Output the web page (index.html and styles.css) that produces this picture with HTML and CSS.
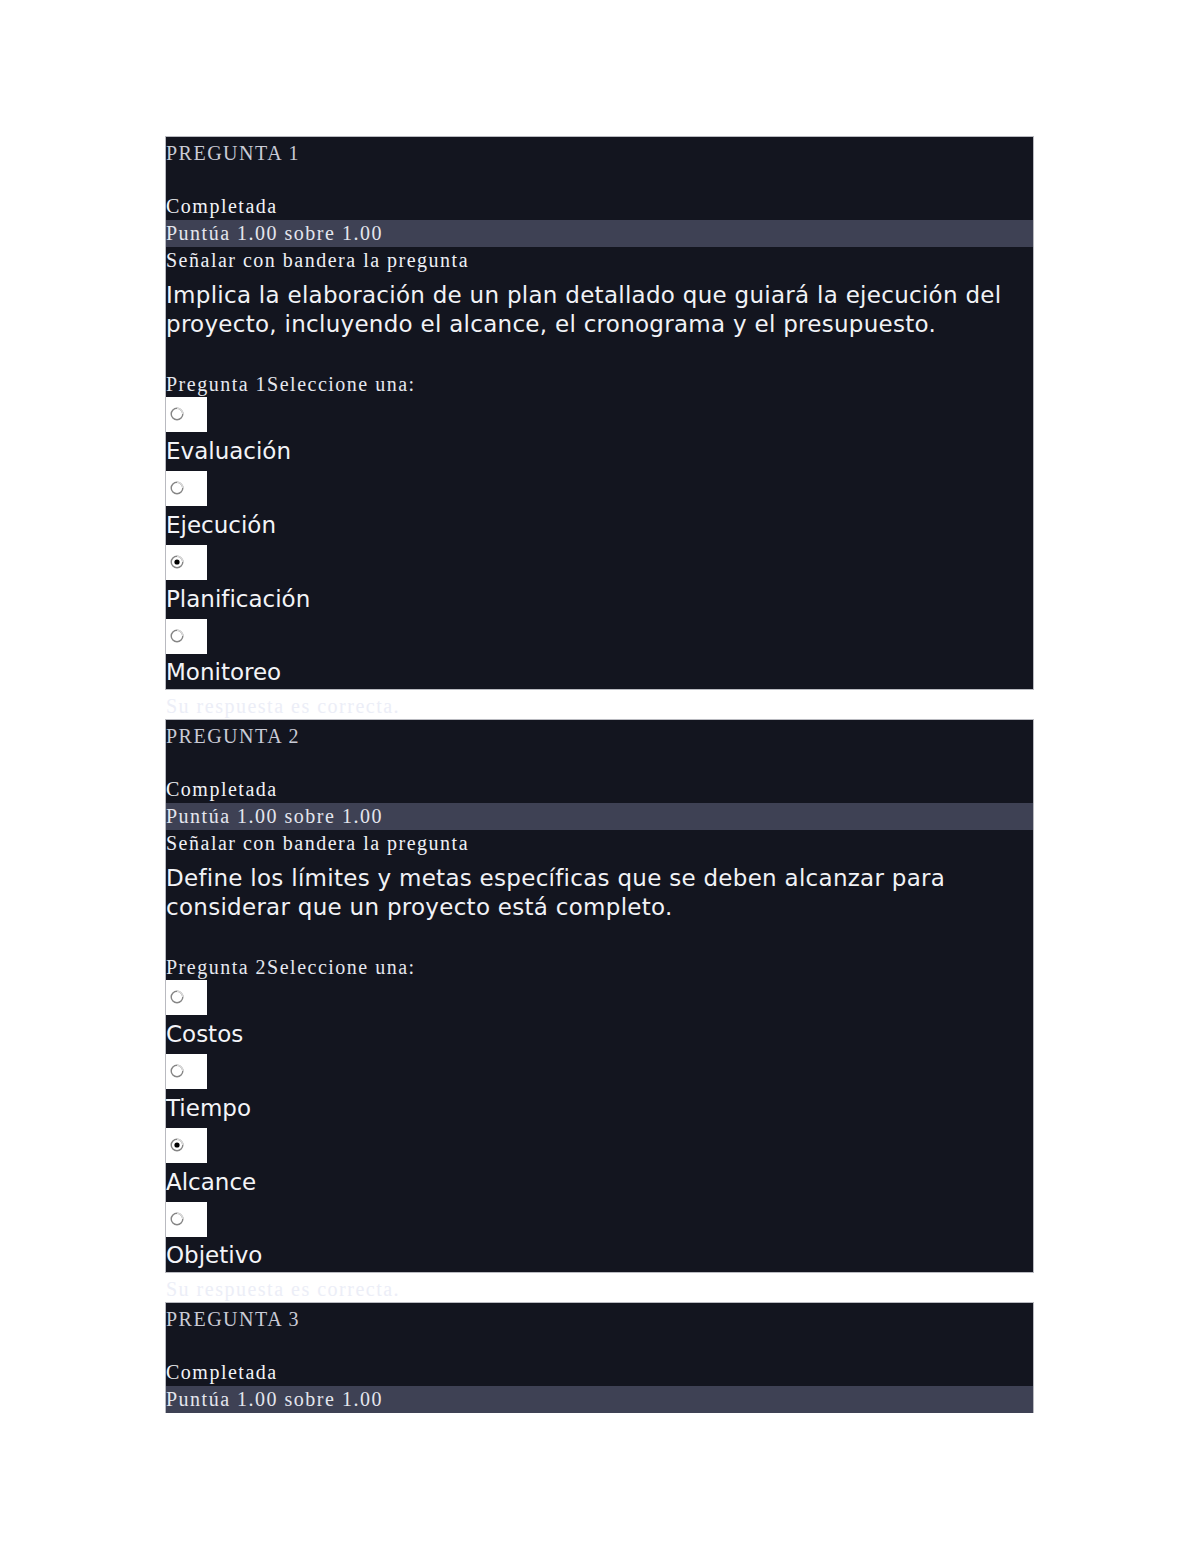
FILE: index.html
```html
<!DOCTYPE html>
<html lang="es">
<head>
<meta charset="utf-8">
<title>Preguntas</title>
<link rel="stylesheet" href="styles.css">
</head>
<body>
<main class="page">
  <section class="q">
    <div class="qno">PREGUNTA 1</div>
    <div class="state">Completada</div>
    <div class="grade">Puntúa 1.00 sobre 1.00</div>
    <div class="flag">Señalar con bandera la pregunta</div>
    <div class="qtext">Implica la elaboración de un plan detallado que guiará la ejecución del proyecto, incluyendo el alcance, el cronograma y el presupuesto.</div>
    <div class="prompt">Pregunta 1Seleccione una:</div>
    <div class="answers">
      <div class="opt">
        <div class="box"><svg class="radio" viewBox="0 0 16 16"><circle cx="8" cy="8" r="5.8" class="ring"/><path d="M8 2.2a5.8 5.8 0 0 1 5.8 5.8" class="ring-hi"/></svg></div>
        <div class="label">Evaluación</div>
      </div>
      <div class="opt">
        <div class="box"><svg class="radio" viewBox="0 0 16 16"><circle cx="8" cy="8" r="5.8" class="ring"/><path d="M8 2.2a5.8 5.8 0 0 1 5.8 5.8" class="ring-hi"/></svg></div>
        <div class="label">Ejecución</div>
      </div>
      <div class="opt">
        <div class="box"><svg class="radio" viewBox="0 0 16 16"><circle cx="8" cy="8" r="5.8" class="ring"/><path d="M8 2.2a5.8 5.8 0 0 1 5.8 5.8" class="ring-hi"/><circle cx="8" cy="8" r="2.6" class="dot"/></svg></div>
        <div class="label">Planificación</div>
      </div>
      <div class="opt">
        <div class="box"><svg class="radio" viewBox="0 0 16 16"><circle cx="8" cy="8" r="5.8" class="ring"/><path d="M8 2.2a5.8 5.8 0 0 1 5.8 5.8" class="ring-hi"/></svg></div>
        <div class="label">Monitoreo</div>
      </div>
    </div>
  </section>
  <div class="feedback">Su respuesta es correcta.</div>

  <section class="q">
    <div class="qno">PREGUNTA 2</div>
    <div class="state">Completada</div>
    <div class="grade">Puntúa 1.00 sobre 1.00</div>
    <div class="flag">Señalar con bandera la pregunta</div>
    <div class="qtext">Define los límites y metas específicas que se deben alcanzar para considerar que un proyecto está completo.</div>
    <div class="prompt">Pregunta 2Seleccione una:</div>
    <div class="answers">
      <div class="opt">
        <div class="box"><svg class="radio" viewBox="0 0 16 16"><circle cx="8" cy="8" r="5.8" class="ring"/><path d="M8 2.2a5.8 5.8 0 0 1 5.8 5.8" class="ring-hi"/></svg></div>
        <div class="label">Costos</div>
      </div>
      <div class="opt">
        <div class="box"><svg class="radio" viewBox="0 0 16 16"><circle cx="8" cy="8" r="5.8" class="ring"/><path d="M8 2.2a5.8 5.8 0 0 1 5.8 5.8" class="ring-hi"/></svg></div>
        <div class="label">Tiempo</div>
      </div>
      <div class="opt">
        <div class="box"><svg class="radio" viewBox="0 0 16 16"><circle cx="8" cy="8" r="5.8" class="ring"/><path d="M8 2.2a5.8 5.8 0 0 1 5.8 5.8" class="ring-hi"/><circle cx="8" cy="8" r="2.6" class="dot"/></svg></div>
        <div class="label">Alcance</div>
      </div>
      <div class="opt">
        <div class="box"><svg class="radio" viewBox="0 0 16 16"><circle cx="8" cy="8" r="5.8" class="ring"/><path d="M8 2.2a5.8 5.8 0 0 1 5.8 5.8" class="ring-hi"/></svg></div>
        <div class="label">Objetivo</div>
      </div>
    </div>
  </section>
  <div class="feedback">Su respuesta es correcta.</div>

  <section class="q q-short">
    <div class="qno">PREGUNTA 3</div>
    <div class="state">Completada</div>
    <div class="grade">Puntúa 1.00 sobre 1.00</div>
  </section>
</main>
</body>
</html>
```

FILE: styles.css
```css
html, body {
  margin: 0;
  padding: 0;
  background: #ffffff;
}

.page {
  width: 867px;
  margin: 0 0 0 166px;
  padding-top: 137px;
  font-family: "Liberation Serif", "Times New Roman", serif;
  font-size: 20px;
  letter-spacing: 1.5px;
}

.q {
  background: #13151f;
  box-shadow: 0 0 0 1px #b9bac0;
  color: #eef0f6;
}

.qno {
  padding-top: 3px;
  line-height: 27px;
  color: #c9cbd6;
  margin-bottom: 26px;
}

.state {
  line-height: 27px;
  color: #f2f3f7;
}

.grade {
  line-height: 27px;
  background: #3e4154;
  color: #e4e6ee;
}

.flag {
  line-height: 27px;
  color: #eef0f6;
}

.qtext {
  margin-top: 7px;
  font-family: "DejaVu Sans", Verdana, sans-serif;
  font-size: 23px;
  letter-spacing: 0.28px;
  line-height: 29px;
  color: #f1f2f6;
  padding-right: 20px;
}

.prompt {
  margin-top: 32px;
  line-height: 26px;
  color: #e6e8ef;
}

.answers {
  display: flex;
  flex-direction: column;
}

.opt {
  display: flex;
  flex-direction: column;
}

.box {
  width: 41px;
  height: 35px;
  background: #ffffff;
  display: flex;
  align-items: center;
  padding-left: 3px;
  box-sizing: border-box;
}

.radio {
  width: 16px;
  height: 16px;
  margin-top: -2px;
}

.ring {
  fill: #ffffff;
  stroke: #858585;
  stroke-width: 1.4;
}

.ring-hi {
  fill: none;
  stroke: #dadada;
  stroke-width: 1.5;
}

.dot {
  fill: #000000;
}

.label {
  font-family: "DejaVu Sans", Verdana, sans-serif;
  font-size: 23px;
  letter-spacing: 0;
  line-height: 35px;
  padding-top: 2px;
  padding-bottom: 2px;
  color: #f3f4f8;
}

.opt:last-child .label {
  padding-bottom: 0;
  line-height: 33px;
}

.feedback {
  padding-top: 4px;
  line-height: 27px;
  color: #eceef7;
}
```
